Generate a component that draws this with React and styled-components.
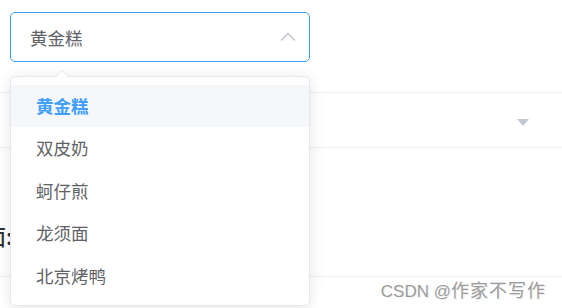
import React from "react";
import styled, { createGlobalStyle } from "styled-components";

const Global = createGlobalStyle`
  html, body { margin: 0; padding: 0; background: #fff; }
  body {
    width: 562px; height: 308px; overflow: hidden;
    font-family: "Noto Sans CJK SC", "Noto Sans", sans-serif;
  }
`;

const Page = styled.div`
  position: relative;
  width: 562px;
  height: 308px;
  padding-top: 12px;
  box-sizing: border-box;
  overflow: hidden;
`;

const SelectWrap = styled.div`
  position: relative;
  margin-left: 10px;
  width: 300px;
  z-index: 2;
`;

const SelectBox = styled.div`
  box-sizing: border-box;
  height: 50px;
  border: 1px solid #409eff;
  border-radius: 5px;
  padding: 0 13px 0 19px;
  display: flex;
  align-items: center;
  justify-content: space-between;
  font-size: 17.5px;
  color: #606266;
  background: #fff;
`;

const Dropdown = styled.div`
  position: absolute;
  top: 64px;
  left: 0;
  width: 300px;
  box-sizing: border-box;
  border: 1px solid #e4e7ed;
  border-radius: 5px;
  background: #fff;
  box-shadow: 0 2px 15px rgba(0, 0, 0, 0.1);
  padding: 7.5px 0;
`;

const Arrow = styled.div`
  position: absolute;
  top: -7px;
  left: 44px;
  width: 0;
  height: 0;
  border-left: 7px solid transparent;
  border-right: 7px solid transparent;
  border-bottom: 7px solid #e4e7ed;
  &::after {
    content: "";
    position: absolute;
    top: 1px;
    left: -6px;
    border-left: 6px solid transparent;
    border-right: 6px solid transparent;
    border-bottom: 6px solid #fff;
  }
`;

const Item = styled.div`
  height: 42.5px;
  line-height: 42.5px;
  padding: 0 25px;
  font-size: 17.5px;
  color: ${(p) => (p.$selected ? "#409eff" : "#606266")};
  font-weight: ${(p) => (p.$selected ? 700 : 400)};
  background: ${(p) => (p.$selected ? "#f5f7fa" : "transparent")};
  white-space: nowrap;
`;

const Table = styled.div`
  margin-top: 30px;
  display: flex;
  flex-direction: column;
`;

const HeaderRow = styled.div`
  height: 54px;
  border-top: 1px solid #ebeef5;
  border-bottom: 1px solid #ebeef5;
  display: flex;
  align-items: center;
  justify-content: flex-end;
  padding-right: 33px;
`;

const BodyRow = styled.div`
  height: 129px;
  box-sizing: border-box;
  border-bottom: 1px solid #ebeef5;
  display: flex;
  align-items: flex-start;
  padding-top: 76px;
`;

const Caret = styled.div`
  width: 0;
  height: 0;
  border-left: 6px solid transparent;
  border-right: 6px solid transparent;
  border-top: 7px solid #c0c8d4;
  margin-top: 4px;
`;

const Label = styled.div`
  margin-left: -38px;
  font-size: 22px;
  line-height: 22px;
  font-weight: 500;
  color: #303133;
  white-space: nowrap;
`;

const Watermark = styled.div`
  position: absolute;
  right: 16px;
  top: 276px;
  font-family: "Liberation Sans", "Noto Sans CJK SC", sans-serif;
  font-size: 17px;
  color: #9a9a9a;
  text-shadow: 0 0 1px #fff, 1px 1px 1px rgba(0, 0, 0, 0.08);
`;

const WmCjk = styled.span`
  font-size: 18px;
  letter-spacing: 1px;
`;

const options = ["黄金糕", "双皮奶", "蚵仔煎", "龙须面", "北京烤鸭"];

export default function App() {
  return (
    <Page>
      <Global />
      <SelectWrap>
        <SelectBox>
          <span>黄金糕</span>
          <svg width="16" height="10" viewBox="0 0 16 10">
            <polyline
              points="1,8.5 8,1.5 15,8.5"
              fill="none"
              stroke="#c0c4cc"
              strokeWidth="1.3"
            />
          </svg>
        </SelectBox>
        <Dropdown>
          <Arrow />
          {options.map((o, i) => (
            <Item key={o} $selected={i === 0}>
              {o}
            </Item>
          ))}
        </Dropdown>
      </SelectWrap>
      <Table>
        <HeaderRow>
          <Caret />
        </HeaderRow>
        <BodyRow>
          <Label>页面:</Label>
        </BodyRow>
      </Table>
      <Watermark>
        CSDN @<WmCjk>作家不写作</WmCjk>
      </Watermark>
    </Page>
  );
}
